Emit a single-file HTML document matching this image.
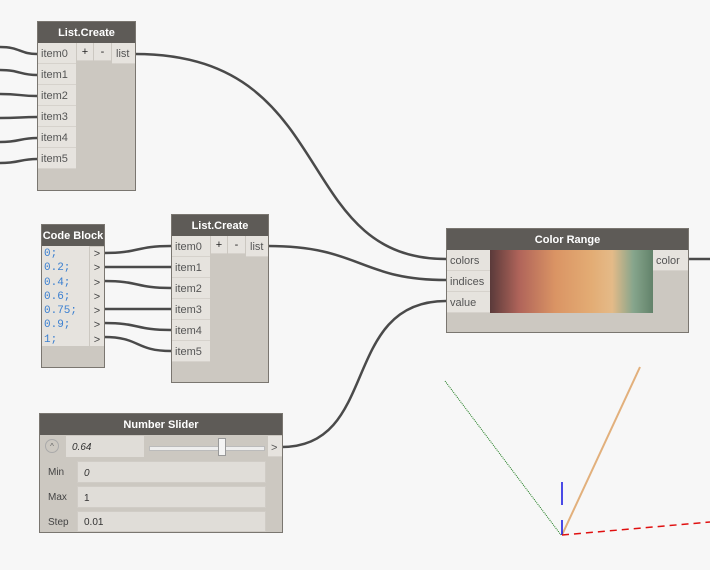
<!DOCTYPE html>
<html><head><style>
body{margin:0;width:710px;height:570px;background:#f7f7f7;position:relative;overflow:hidden;font-family:"Liberation Sans",sans-serif;font-size:11px;color:#555}
.n{position:absolute;background:#ccc8c1;border:1px solid #7a7670;box-sizing:border-box}
.h{position:absolute;left:0;right:0;top:0;height:21px;background:#5e5b57;color:#fff;font-weight:bold;text-align:center;line-height:22px;font-size:11px}
.p{position:absolute;background:#e6e3de;border-bottom:1px solid #d6d2cc;box-sizing:border-box;line-height:23px;padding-left:3px;color:#555}
.a{position:absolute}
svg{position:absolute;left:0;top:0}
.f{position:absolute;background:#e0ddd8;border:1px solid #d0ccc6;box-sizing:border-box;line-height:21px;padding-left:6px;color:#333;font-size:10px}
.m{font-family:"Liberation Mono",monospace;color:#3a7fd0;font-size:11px}
</style></head><body>
<svg width="710" height="570" fill="none" stroke="#4a4a4a" stroke-width="2.5">
<path d="M0 47 C20 47,20 54,37 54"/>
<path d="M0 70 C20 70,20 75,37 75"/>
<path d="M0 94 C20 94,20 96,37 96"/>
<path d="M0 118 C20 118,20 117,37 117"/>
<path d="M0 142 C20 142,20 138,37 138"/>
<path d="M0 163 C20 163,20 159,37 159"/>
<path d="M135 54 C340 54,290 259,446 259"/>
<path d="M104 253 C140 253,135 246,171 246"/>
<path d="M104 267 C140 267,135 267,171 267"/>
<path d="M104 281 C140 281,135 288,171 288"/>
<path d="M104 309 C140 309,135 309,171 309"/>
<path d="M104 323 C140 323,135 330,171 330"/>
<path d="M104 337 C140 337,135 351,171 351"/>
<path d="M268 246 C360 246,360 280,446 280"/>
<path d="M282 447 C380 447,340 301,446 301"/>
<path d="M688 259 L710 259"/>
<g stroke-width="1">
<path d="M445 381 L561 535" stroke="#1a7a1a" stroke-dasharray="1 1"/>
<path d="M640 367 L562 535" stroke="#e2b07c" stroke-width="2"/>
<path d="M562 482 L562 505 M562 520 L562 535" stroke="#1010e0" stroke-width="1.5"/>
<path d="M562 535 L710 522" stroke="#e01010" stroke-width="1.5" stroke-dasharray="7 5"/>
</g>
</svg>

<div class="n" style="left:37px;top:21px;width:99px;height:170px">
<div class="h">List.Create</div>
<div class="p" style="left:0;top:21px;width:38px;height:21px">item0</div>
<div class="p" style="left:0;top:42px;width:38px;height:21px">item1</div>
<div class="p" style="left:0;top:63px;width:38px;height:21px">item2</div>
<div class="p" style="left:0;top:84px;width:38px;height:21px">item3</div>
<div class="p" style="left:0;top:105px;width:38px;height:21px">item4</div>
<div class="p" style="left:0;top:126px;width:38px;height:21px">item5</div>
<div class="p" style="left:39px;top:21px;width:16px;height:18px;padding:0;text-align:center;line-height:18px;color:#222">+</div>
<div class="p" style="left:56px;top:21px;width:17px;height:18px;padding:0;text-align:center;line-height:18px;color:#222">-</div>
<div class="p" style="left:74px;top:21px;width:23px;height:21px;padding-left:4px">list</div>
</div>

<div class="n" style="left:41px;top:224px;width:64px;height:144px">
<div class="h">Code Block</div>
<div class="a" style="left:0;top:21px;width:47px;height:100px;background:#e6e3de"></div>
<div class="a m" style="left:2px;top:22px;line-height:14.3px">0;<br>0.2;<br>0.4;<br>0.6;<br>0.75;<br>0.9;<br>1;</div>
<div class="a" style="left:48px;top:22px;width:14px;height:99px;background:#e6e3de;line-height:14.3px;text-align:center;color:#444">&gt;<br>&gt;<br>&gt;<br>&gt;<br>&gt;<br>&gt;<br>&gt;</div>
</div>

<div class="n" style="left:171px;top:214px;width:98px;height:169px">
<div class="h">List.Create</div>
<div class="p" style="left:0;top:21px;width:38px;height:21px">item0</div>
<div class="p" style="left:0;top:42px;width:38px;height:21px">item1</div>
<div class="p" style="left:0;top:63px;width:38px;height:21px">item2</div>
<div class="p" style="left:0;top:84px;width:38px;height:21px">item3</div>
<div class="p" style="left:0;top:105px;width:38px;height:21px">item4</div>
<div class="p" style="left:0;top:126px;width:38px;height:21px">item5</div>
<div class="p" style="left:39px;top:21px;width:16px;height:18px;padding:0;text-align:center;line-height:18px;color:#222">+</div>
<div class="p" style="left:56px;top:21px;width:17px;height:18px;padding:0;text-align:center;line-height:18px;color:#222">-</div>
<div class="p" style="left:74px;top:21px;width:22px;height:21px;padding-left:4px">list</div>
</div>

<div class="n" style="left:446px;top:228px;width:243px;height:105px">
<div class="h">Color Range</div>
<div class="p" style="left:0;top:21px;width:43px;height:21px">colors</div>
<div class="p" style="left:0;top:42px;width:43px;height:21px">indices</div>
<div class="p" style="left:0;top:63px;width:43px;height:21px">value</div>
<div class="a" style="left:43px;top:21px;width:163px;height:63px;background:linear-gradient(90deg,#5a3a3a 0%,#b0645a 18%,#da9464 40%,#e3ac74 62%,#e4ba88 75%,#86a58c 88%,#62826a 100%)"></div>
<div class="p" style="left:206px;top:21px;width:35px;height:21px">color</div>
</div>

<div class="n" style="left:39px;top:413px;width:244px;height:120px">
<div class="h">Number Slider</div>
<div class="a" style="left:5px;top:25px;width:14px;height:14px;border:1px solid #aaa;border-radius:50%;box-sizing:border-box;text-align:center;font-size:8px;line-height:13px;color:#666">^</div>
<div class="f" style="left:26px;top:22px;width:78px;height:21px;border:none;font-style:italic;line-height:24px">0.64</div>
<div class="a" style="left:109px;top:32px;width:114px;height:3px;background:#eee;border:1px solid #bbb"></div>
<div class="a" style="left:178px;top:24px;width:8px;height:18px;background:#f4f4f4;border:1px solid #999;box-sizing:border-box"></div>
<div class="p" style="left:228px;top:22px;width:14px;height:21px;padding-left:3px;line-height:25px">&gt;</div>
<div class="a" style="left:8px;top:53px;color:#444;font-size:10px">Min</div>
<div class="f" style="left:37px;top:47px;width:189px;height:22px;font-style:italic;line-height:23px">0</div>
<div class="a" style="left:8px;top:78px;color:#444;font-size:10px">Max</div>
<div class="f" style="left:37px;top:72px;width:189px;height:22px;line-height:23px">1</div>
<div class="a" style="left:8px;top:103px;color:#444;font-size:10px">Step</div>
<div class="f" style="left:37px;top:97px;width:189px;height:21px;line-height:22px">0.01</div>
</div>
</body></html>
